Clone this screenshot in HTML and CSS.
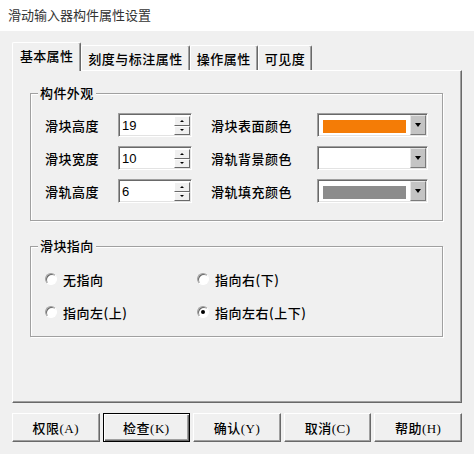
FILE: index.html
```html
<!DOCTYPE html>
<html lang="zh-CN">
<head>
<meta charset="utf-8">
<title>滑动输入器构件属性设置</title>
<link rel="stylesheet" href="styles.css">
</head>
<body>
<div class="window">
  <div class="titlebar">滑动输入器构件属性设置</div>
  <div class="client">
    <div class="tabs">
      <div class="tab active">基本属性</div>
      <div class="tab">刻度与标注属性</div>
      <div class="tab">操作属性</div>
      <div class="tab">可见度</div>
    </div>
    <div class="panel">
      <fieldset class="group look">
        <legend>构件外观</legend>
        <div class="grid">
          <span class="label">滑块高度</span>
          <div class="spin"><span class="val">19</span><div class="spin-btns"><span class="sb up"></span><span class="sb down"></span></div></div>
          <span class="label">滑块表面颜色</span>
          <div class="combo"><span class="swatch orange"></span><span class="arrow"></span></div>

          <span class="label">滑块宽度</span>
          <div class="spin"><span class="val">10</span><div class="spin-btns"><span class="sb up"></span><span class="sb down"></span></div></div>
          <span class="label">滑轨背景颜色</span>
          <div class="combo"><span class="swatch white"></span><span class="arrow"></span></div>

          <span class="label">滑轨高度</span>
          <div class="spin"><span class="val">6</span><div class="spin-btns"><span class="sb up"></span><span class="sb down"></span></div></div>
          <span class="label">滑轨填充颜色</span>
          <div class="combo"><span class="swatch gray"></span><span class="arrow"></span></div>
        </div>
      </fieldset>
      <fieldset class="group dir">
        <legend>滑块指向</legend>
        <div class="radios">
          <div class="radio"><span class="circle"></span>无指向</div>
          <div class="radio"><span class="circle"></span>指向右(下)</div>
          <div class="radio"><span class="circle"></span>指向左(上)</div>
          <div class="radio"><span class="circle checked"></span>指向左右(上下)</div>
        </div>
      </fieldset>
    </div>
    <div class="buttons">
      <div class="btn">权限(A)</div>
      <div class="btn default">检查(K)</div>
      <div class="btn">确认(Y)</div>
      <div class="btn">取消(C)</div>
      <div class="btn">帮助(H)</div>
    </div>
  </div>
</div>
</body>
</html>
```

FILE: styles.css
```css
* { box-sizing: border-box; }
html, body { margin: 0; padding: 0; }
body {
  width: 474px;
  height: 454px;
  overflow: hidden;
  background: #f0f0f0;
  font-family: "Noto Sans CJK SC", "Liberation Sans", sans-serif;
  font-size: 13px;
  font-weight: 500;
  color: #000;
}
.titlebar {
  height: 31px;
  background: #fff;
  padding-left: 8px;
  line-height: 30px;
  font-size: 13px;
  font-weight: 400;
  color: #333;
}
.client { padding: 11px 12px 0; }

.tabs {
  display: flex;
  align-items: flex-end;
  height: 28px;
  position: relative;
  z-index: 1;
}
.tab {
  height: 25px;
  line-height: 25px;
  padding: 0 6px;
  background: #f0f0f0;
  border-top: 1px solid #fff;
  border-left: 1px solid #fff;
  border-right: 1px solid #696969;
  box-shadow: inset -1px 0 #a0a0a0;
  border-radius: 2px 2px 0 0;
  white-space: nowrap;
  letter-spacing: 0.5px;
}
.tab.active {
  height: 29px;
  line-height: 26px;
  margin-bottom: -1px;
  padding: 0 7px;
  letter-spacing: 0.3px;
}

.panel {
  height: 333px;
  border: 1px solid;
  border-color: #fff #696969 #696969 #fff;
  box-shadow: inset -1px -1px #a0a0a0;
  padding: 14px 18px 0 17px;
}
.group {
  margin: 0;
  min-width: 0;
  border: 1px solid #a0a0a0;
  box-shadow: 1px 1px 0 #fff, inset 1px 1px 0 #fff;
  padding: 12px 14px 17px;
}
.group legend {
  padding: 0 2px;
  margin-left: -7px;
  line-height: 16px;
  background: #f0f0f0;
  letter-spacing: 0.4px;
}
.group.dir {
  margin-top: 17px;
  padding: 15px 14px 14px;
}

.grid {
  display: grid;
  grid-template-columns: 73px 93px 106px 111px;
  grid-auto-rows: 24px;
  row-gap: 9px;
  align-items: center;
}
.label { letter-spacing: 0.5px; white-space: nowrap; }

.spin {
  width: 74px;
  height: 24px;
  background: #fff;
  border: 1px solid;
  border-color: #a0a0a0 #fff #fff #a0a0a0;
  box-shadow: inset 1px 1px #696969, inset -1px -1px #e3e3e3;
  display: flex;
  padding: 2px 1px 1px 3px;
}
.val {
  flex: 1;
  font-family: "Liberation Sans", sans-serif;
  font-size: 13px;
  font-weight: 400;
  line-height: 19px;
}
.spin-btns {
  width: 16px;
  display: flex;
  flex-direction: column;
}
.sb {
  flex: 1;
  background: #f0f0f0;
  border: 1px solid;
  border-color: #fff #696969 #696969 #fff;
  display: flex;
  align-items: center;
  justify-content: center;
}
.sb::after {
  content: "";
  border-left: 2px solid transparent;
  border-right: 2px solid transparent;
}
.sb.up::after { border-bottom: 2px solid #000; }
.sb.down::after { border-top: 2px solid #000; }

.combo {
  width: 111px;
  height: 24px;
  background: #fff;
  border: 1px solid;
  border-color: #a0a0a0 #fff #fff #a0a0a0;
  box-shadow: inset 1px 1px #696969, inset -1px -1px #e3e3e3;
  display: flex;
  padding: 1px;
}
.swatch {
  flex: 1;
  margin: 5px 4px 2px 4px;
}
.swatch.orange { background: #f47c06; }
.swatch.white { background: #fff; }
.swatch.gray { background: #8c8c8c; }
.arrow {
  width: 16px;
  background: #c4c4c4;
  border: 1px solid;
  border-color: #e6e6e6 #7a7a7a #7a7a7a #e6e6e6;
  display: flex;
  align-items: center;
  justify-content: center;
}
.arrow::after {
  content: "";
  border-left: 3.5px solid transparent;
  border-right: 3.5px solid transparent;
  border-top: 4px solid #000;
}

.radios {
  display: grid;
  grid-template-columns: 152px 1fr;
  grid-auto-rows: 20px;
  row-gap: 13px;
}
.radio {
  display: flex;
  align-items: center;
  gap: 6px;
  letter-spacing: 0.5px;
  white-space: nowrap;
}
.circle {
  width: 12px;
  height: 12px;
  flex: none;
  border-radius: 50%;
  background: #fff;
  border: 1px solid;
  border-color: #a0a0a0 #fff #fff #a0a0a0;
  box-shadow: inset 1px 1px #696969;
  display: flex;
  align-items: center;
  justify-content: center;
}
.circle.checked::after {
  content: "";
  width: 4px;
  height: 4px;
  border-radius: 50%;
  background: #000;
}

.buttons {
  margin-top: 10px;
  display: flex;
  gap: 3px;
}
.btn {
  flex: 1;
  height: 29px;
  background: #f0f0f0;
  border: 1px solid;
  border-color: #fff #696969 #696969 #fff;
  box-shadow: inset -1px -1px #a0a0a0;
  display: flex;
  align-items: center;
  justify-content: center;
  font-family: "Liberation Serif", "Noto Sans CJK SC", serif;
  font-size: 13px;
  font-weight: 500;
  letter-spacing: 0.5px;
}
.btn.default {
  border-color: #000;
  box-shadow: inset 1px 1px #fff, inset -1px -1px #696969, inset -2px -2px #a0a0a0;
}
```
